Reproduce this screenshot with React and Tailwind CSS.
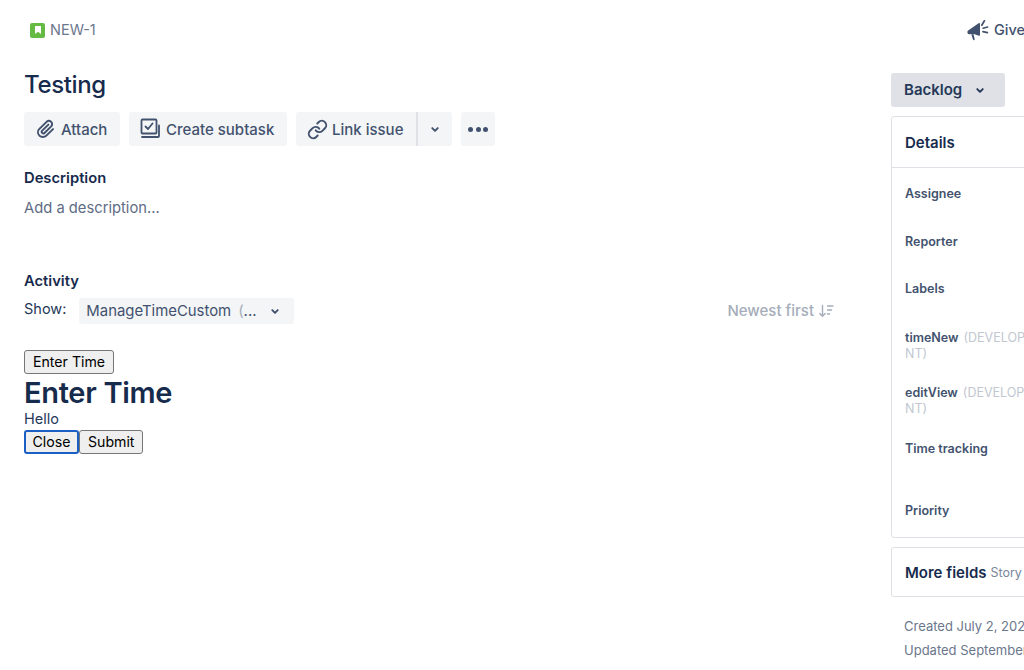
import React from "react";
import { Link } from "lucide-react";

const Chevron = ({ className = "" }) => (
  <svg viewBox="0 0 24 24" className={className} fill="currentColor">
    <path d="M8.292 10.293a1.009 1.009 0 000 1.419l2.939 2.965c.218.215.5.322.779.322s.556-.107.769-.322l2.93-2.955a1.01 1.01 0 000-1.419.987.987 0 00-1.406 0l-2.298 2.317-2.307-2.327a.99.99 0 00-1.406 0z" />
  </svg>
);

const Clip = () => (
  <svg viewBox="0 0 24 24" className="w-[24px] h-[24px]" fill="#42526e">
    <path d="M11.643 17.965c-1.53 1.495-4.016 1.496-5.542.004a3.773 3.773 0 01.002-5.412l7.147-6.985a2.316 2.316 0 013.233-.003c.893.873.895 2.282.004 3.153l-6.703 6.55a.653.653 0 01-.914-.008.62.62 0 010-.902l6.229-6.087a.941.941 0 000-1.353.995.995 0 00-1.384 0l-6.23 6.087a2.502 2.502 0 000 3.607 2.643 2.643 0 003.683.009l6.703-6.55a4.074 4.074 0 00-.003-5.859 4.306 4.306 0 00-6.002.003l-7.148 6.985a5.655 5.655 0 00-.001 8.118c2.29 2.239 6.015 2.238 8.31-.005l6.686-6.533a.941.941 0 000-1.353.995.995 0 00-1.384 0l-6.686 6.534z" />
  </svg>
);

const Subtask = () => (
  <svg viewBox="0 0 22 22" className="w-[22px] h-[22px]" fill="none" stroke="#42526e" strokeWidth="1.8" strokeLinecap="round" strokeLinejoin="round">
    <rect x="1.5" y="1.5" width="15" height="14" rx="1" />
    <path d="M5.5 8.5l2.5 2.5L12.5 5.5" />
    <path d="M2 19h16a1 1 0 001-1V7.5" />
  </svg>
);

const Megaphone = () => (
  <svg viewBox="0 0 22 22" className="w-[22px] h-[22px]" fill="#42526e">
    <path d="M0.8 11.8L11.6 4.2c.7-.4 1.4-.2 1.4.6v11.2c0 .6-.5.9-1.1.7L6.8 14.9l-4.7.3c-.7 0-1.2-.3-1.5-.9-.3-.8-.2-1.9.2-2.5z" />
    <path d="M4.3 15.4l2.1-.3 1.3 5c.1.6-.2 1-.7 1.1-.5.1-.9-.1-1-.6z" />
    <path d="M14.8 6.2l2.6-4.4" stroke="#42526e" strokeWidth="1.7" strokeLinecap="round" />
    <path d="M16.2 9.2l4.4-1.2" stroke="#42526e" strokeWidth="1.7" strokeLinecap="round" />
    <path d="M16 12.6l4.4 1" stroke="#42526e" strokeWidth="1.7" strokeLinecap="round" />
  </svg>
);

const SortIcon = () => (
  <svg viewBox="0 0 16 14" className="w-[16px] h-[14px]" fill="none" stroke="#a5adba" strokeWidth="1.4" strokeLinecap="round" strokeLinejoin="round">
    <path d="M4.5 1.5v10.5M1.8 9.5l2.7 2.7 2.7-2.7" />
    <path d="M9.5 2h5.5M9.5 6h4M9.5 10h2" />
  </svg>
);

const ToolButton = ({ icon, children, className = "" }) => (
  <button className={"h-[34px] bg-[#f4f5f7] rounded-[3px] flex items-center text-[#42526e] text-[15px] leading-[36px] font-medium " + className}>
    {icon}
    <span className="pt-[1px]">{children}</span>
  </button>
);

const NativeButton = ({ children, className = "border-[#767676] px-[8px]" }) => (
  <button className={"h-[24px] bg-[#efefef] border rounded-[3px] text-black text-[14.15px] leading-none " + className}>
    {children}
  </button>
);

const Field = ({ label, note, h }) => (
  <div className={"text-[12.5px] leading-[16px] font-semibold text-[#42526e] " + h}>
    {label}
    {note && (
      <span className="font-normal text-[#c1c7d0] text-[12.5px] ml-[5px]">
        (DEVELOPME
        <br />
        NT)
      </span>
    )}
  </div>
);

export default function App() {
  return (
    <div className="w-[1024px] h-[670px] bg-white overflow-hidden flex font-['Inter',sans-serif] text-[#172b4d]">
      <main className="w-[891px] shrink-0 pl-[24px] pr-[57px] flex flex-col">
        <div className="flex items-center gap-[5px] pl-[6px] pt-[20px] h-[40px] text-[14.5px] text-[#6b778c]">
          <span className="w-[15px] h-[15px] rounded-[2px] bg-[#65ba43] flex items-center justify-center">
            <svg viewBox="0 0 10 10" className="w-[10px] h-[10px]" fill="#fff">
              <path d="M2 1h6v8L5 6.8 2 9z" />
            </svg>
          </span>
          NEW-1
        </div>
        <h1 className="mt-[27px] text-[24px] leading-[36px] font-medium tracking-[-0.35px] text-[#172b4d]">Testing</h1>
        <div className="mt-[9px] flex gap-[9px]">
          <ToolButton className="w-[96px] pl-[10px] gap-[3px]" icon={<Clip />}>Attach</ToolButton>
          <ToolButton className="w-[158px] pl-[11px] gap-[4px]" icon={<Subtask />}>Create subtask</ToolButton>
          <div className="flex">
            <ToolButton className="w-[120px] pl-[11px] gap-[4px] rounded-r-none" icon={<Link size={21} strokeWidth={2.2} color="#42526e" />}>Link issue</ToolButton>
            <div className="w-[2px] bg-[#dfe1e6]" />
            <button className="w-[34px] h-[34px] bg-[#f4f5f7] rounded-r-[3px] flex items-center justify-center text-[#42526e]">
              <Chevron className="w-[22px] h-[22px]" />
            </button>
          </div>
          <button className="w-[34px] h-[34px] bg-[#f4f5f7] rounded-[3px] flex items-center justify-center gap-[2.5px]">
            <span className="w-[5px] h-[5px] rounded-full bg-[#42526e]" />
            <span className="w-[5px] h-[5px] rounded-full bg-[#42526e]" />
            <span className="w-[5px] h-[5px] rounded-full bg-[#42526e]" />
          </button>
        </div>
        <h2 className="mt-[22px] text-[14.75px] leading-[20px] font-semibold">Description</h2>
        <p className="mt-[10px] text-[14.75px] leading-[20px] text-[#5e6c84]">Add a description...</p>
        <h2 className="mt-[53px] text-[14.75px] leading-[20px] font-semibold">Activity</h2>
        <div className="mt-[7px] flex items-start justify-between">
          <div className="flex items-start">
            <span className="text-[14.5px] leading-[22px] text-[#253858]">Show:</span>
            <button className="ml-[13px] w-[215px] h-[26px] bg-[#f4f5f7] rounded-[3px] flex items-center pl-[7px] text-[14.9px] font-normal text-[#42526e]">
              ManageTimeCustom
              <span className="ml-[7px] text-[#a5adba]">(</span>
              <span>...</span>
              <Chevron className="w-[22px] h-[22px] ml-[8px]" />
            </button>
          </div>
          <div className="flex items-center h-[26px] text-[15px] font-medium text-[#a5adba] gap-[4px]">
            Newest first
            <SortIcon />
          </div>
        </div>
        <div className="mt-[26px] flex flex-col items-start">
          <NativeButton>Enter Time</NativeButton>
          <h1 className="mt-[1px] text-[29px] leading-[35px] font-semibold tracking-[-0.3px] text-[#172b4d]">Enter Time</h1>
          <p className="mb-[2px] text-[14.5px] leading-[18px] text-[#253858]">Hello</p>
          <div className="flex">
            <NativeButton className="border-2 border-[#1a5fc4] px-[6.5px]">Close</NativeButton>
            <NativeButton>Submit</NativeButton>
          </div>
        </div>
      </main>
      <aside className="w-[300px] shrink-0 flex flex-col relative">
        <div className="absolute left-[76px] top-[19px] flex items-center gap-[5px] text-[14.5px] font-medium text-[#42526e]">
          <Megaphone />
          Give feedback
        </div>
        <button className="mt-[73px] w-[114px] h-[34px] bg-[#dfe1e6] rounded-[3px] flex items-center pl-[13px] text-[15px] font-semibold text-[#253858]">
          Backlog
          <Chevron className="w-[22px] h-[22px] ml-[7px]" />
        </button>
        <section className="mt-[9px] h-[422px] border border-[#dfe1e6] rounded-[3px] flex flex-col">
          <h2 className="h-[51px] shrink-0 border-b border-[#dfe1e6] pl-[13px] pt-[2px] flex items-center text-[15px] font-semibold">Details</h2>
          <div className="pl-[13px] pt-[18px]">
            <Field label="Assignee" h="h-[48px]" />
            <Field label="Reporter" h="h-[47px]" />
            <Field label="Labels" h="h-[49px]" />
            <Field label="timeNew" note h="h-[55px]" />
            <Field label="editView" note h="h-[56px]" />
            <Field label="Time tracking" h="h-[62px]" />
            <Field label="Priority" h="h-[20px]" />
          </div>
        </section>
        <section className="mt-[9px] h-[50px] border border-[#dfe1e6] rounded-[3px] pl-[13px] pt-[2px] flex items-center">
          <span className="text-[15px] font-semibold">More fields</span>
          <span className="ml-[4px] text-[12.5px] text-[#7a869a]">Story Points, Original estimate</span>
        </section>
        <p className="mt-[20px] pl-[13px] text-[13px] leading-[18px] text-[#6b778c]">Created July 2, 2024 at 10:00 AM</p>
        <p className="mt-[6px] pl-[13px] text-[13px] leading-[18px] text-[#6b778c]">Updated September 3, 2024 at 4:00 PM</p>
      </aside>
    </div>
  );
}
